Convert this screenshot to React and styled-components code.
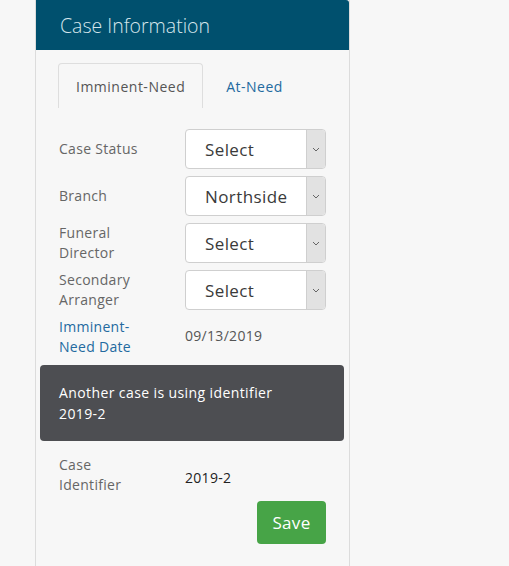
import React from "react";
import styled, { createGlobalStyle } from "styled-components";

const GlobalStyle = createGlobalStyle`
  body {
    margin: 0;
    background: #f7f7f7;
    font-family: "Open Sans", "Liberation Sans", sans-serif;
  }
`;

const Panel = styled.div`
  margin-left: 35px;
  width: 313px;
  min-height: 566px;
  border-left: 1px solid #dcdcdc;
  border-right: 1px solid #dcdcdc;
  background: #f7f7f7;
`;

const Header = styled.div`
  height: 50px;
  background: #00506e;
  border-top-right-radius: 3px;
  display: flex;
  align-items: center;
  padding-left: 24px;
  color: #d6e6ec;
  font-size: 19.5px;
  font-weight: 300;
`;

const Tabs = styled.div`
  display: flex;
  padding: 13px 0 0 22px;
`;

const Tab = styled.div`
  width: 149px;
  height: 45px;
  box-sizing: border-box;
  display: flex;
  align-items: center;
  justify-content: ${(p) => (p.$active ? "center" : "flex-start")};
  padding-left: ${(p) => (p.$active ? "0" : "22px")};
  font-size: 14px;
  letter-spacing: 0.5px;
  color: ${(p) => (p.$active ? "#555" : "#236a9f")};
  border: ${(p) => (p.$active ? "1px solid #dedede" : "1px solid transparent")};
  border-bottom: none;
  border-radius: 4px 4px 0 0;
`;

const Form = styled.div`
  padding: 21px 23px 0 23px;
  display: flex;
  flex-direction: column;
  gap: 7px;
`;

const Row = styled.div`
  display: grid;
  grid-template-columns: 126px 141px;
  align-items: center;
  min-height: 40px;
`;

const Label = styled.div`
  width: 94px;
  font-size: 14px;
  line-height: 20px;
  letter-spacing: 0.3px;
  color: ${(p) => (p.$link ? "#236a9f" : "#666")};
`;

const SelectBox = styled.div`
  height: 40px;
  box-sizing: border-box;
  border: 1px solid #cfcfcf;
  border-radius: 4px;
  background: #fff;
  display: flex;
  overflow: hidden;
`;

const SelectText = styled.div`
  flex: 1;
  display: flex;
  align-items: center;
  padding-left: 19px;
  font-size: 17px;
  color: #3a3a3a;
  letter-spacing: 0.4px;
`;

const Arrow = styled.div`
  width: 18px;
  border-left: 1px solid #cfcfcf;
  background: #e2e2e2;
  display: flex;
  align-items: center;
  justify-content: center;
`;

const Value = styled.div`
  font-size: 14px;
  letter-spacing: 0.3px;
  padding-top: ${(p) => (p.$dark ? "4px" : "0")};
  margin-top: ${(p) => (p.$dark ? "0" : "-3px")};
  color: ${(p) => (p.$dark ? "#222" : "#555")};
`;

const Alert = styled.div`
  margin: 8px 5px 0 4px;
  background: #4d4e52;
  border-radius: 4px;
  padding: 17px 19px 17px 19px;
  color: #fff;
  font-size: 14px;
  line-height: 21px;
  letter-spacing: 0.4px;
`;

const AlertText = styled.div`
  max-width: 235px;
`;

const Bottom = styled.div`
  padding: 14px 23px 0 23px;
  display: flex;
  flex-direction: column;
`;

const Actions = styled.div`
  display: flex;
  justify-content: flex-end;
  padding-right: 23px;
  margin-top: 6px;
`;

const SaveButton = styled.button`
  width: 69px;
  height: 43px;
  border: none;
  border-radius: 4px;
  background: #47a447;
  color: #fff;
  font-family: inherit;
  font-size: 17px;
  letter-spacing: 0.3px;
`;

const Chevron = () => (
  <svg width="8" height="5" viewBox="0 0 8 5">
    <path d="M1 1 L4 4 L7 1" fill="none" stroke="#666" strokeWidth="1" />
  </svg>
);

const Select = ({ value }) => (
  <SelectBox>
    <SelectText>{value}</SelectText>
    <Arrow>
      <Chevron />
    </Arrow>
  </SelectBox>
);

const App = () => (
  <>
    <GlobalStyle />
    <Panel>
      <Header>Case Information</Header>
      <Tabs>
        <Tab $active>Imminent-Need</Tab>
        <Tab>At-Need</Tab>
      </Tabs>
      <Form>
        <Row>
          <Label>Case Status</Label>
          <Select value="Select" />
        </Row>
        <Row>
          <Label>Branch</Label>
          <Select value="Northside" />
        </Row>
        <Row>
          <Label>Funeral Director</Label>
          <Select value="Select" />
        </Row>
        <Row>
          <Label>Secondary Arranger</Label>
          <Select value="Select" />
        </Row>
        <Row>
          <Label $link>Imminent-Need Date</Label>
          <Value>09/13/2019</Value>
        </Row>
      </Form>
      <Alert>
        <AlertText>Another case is using identifier 2019-2</AlertText>
      </Alert>
      <Bottom>
        <Row>
          <Label>Case Identifier</Label>
          <Value $dark>2019-2</Value>
        </Row>
      </Bottom>
      <Actions>
        <SaveButton>Save</SaveButton>
      </Actions>
    </Panel>
  </>
);

export default App;
